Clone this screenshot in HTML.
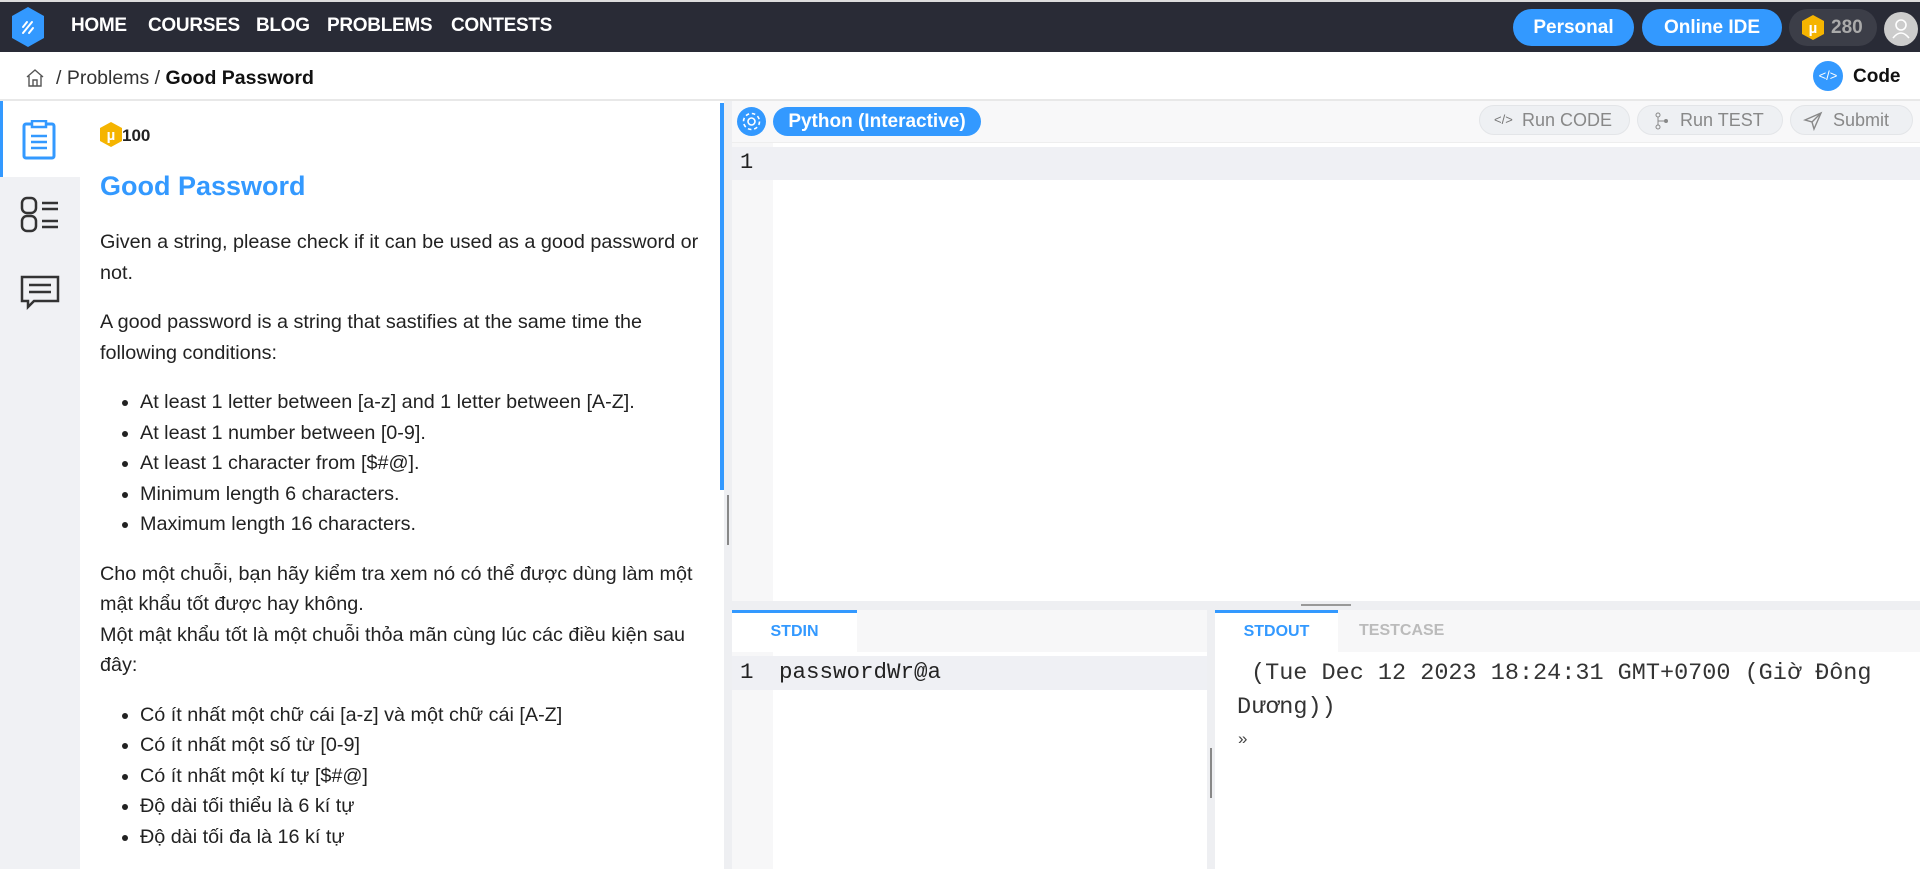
<!DOCTYPE html>
<html><head><meta charset="utf-8">
<style>
*{box-sizing:border-box;margin:0;padding:0}
body{width:1920px;height:869px;overflow:hidden;background:#fff;font-family:"Liberation Sans",Arial,sans-serif;color:#222;position:relative}
.abs{position:absolute}
.nav{left:0;top:0;width:1920px;height:52px;background:#292b36;border-top:2px solid #ddd}
.nav a{position:absolute;top:13px;color:#fff;font-weight:bold;font-size:19px;letter-spacing:-0.3px}
.pill{position:absolute;top:7px;height:37px;border-radius:19px;background:#3399ff;color:#fff;font-weight:bold;font-size:19px;text-align:center;line-height:37px}
.bc{top:52px;left:0;width:1920px;height:49px;border-bottom:2px solid #e8e8e8}
.side{left:0;top:101px;width:80px;height:768px;background:#f0f1f4}
.content{left:100px;top:101px;width:610px;font-size:19.8px;line-height:30.5px;color:#222}
.content p{margin:0}
.content ul{margin:0 0 0 22px;padding-left:18px}
.btn{position:absolute;top:4px;height:30px;border-radius:15px;background:#eef0f3;border:1px solid #e3e5e8;color:#888;font-size:18px;line-height:28px;text-align:left;padding-left:42px}
.mono{font-family:"Liberation Mono","DejaVu Sans Mono",monospace}
</style></head><body>
<div class="abs nav">
  <svg class="abs" style="left:12px;top:5px" width="32" height="40" viewBox="0 0 32 40"><polygon points="16,0 32,9 32,31 16,40 0,31 0,9" fill="#3399ff"/><path d="M11 20 l4-5 M11 26 l9-11 M17 26 l4-5" stroke="#fff" stroke-width="2" stroke-linecap="round"/></svg>
  <a style="left:71px">HOME</a><a style="left:148px">COURSES</a><a style="left:256px">BLOG</a><a style="left:327px">PROBLEMS</a><a style="left:451px">CONTESTS</a>
  <div class="pill" style="left:1513px;width:121px">Personal</div>
  <div class="pill" style="left:1642px;width:140px">Online IDE</div>
  <div class="pill" style="left:1789px;width:88px;background:#3c3e48;color:#aaa;text-align:left;padding-left:42px">280</div>
  <svg class="abs" style="left:1802px;top:13px" width="22" height="25" viewBox="0 0 22 25"><polygon points="11,0 22,6 22,19 11,25 0,19 0,6" fill="#f5b400"/><text x="11" y="18" font-size="15" font-weight="bold" fill="#fff" text-anchor="middle" font-family="Liberation Sans">µ</text></svg>
  <div class="abs" style="left:1884px;top:10px;width:34px;height:34px;border-radius:17px;background:#ccc"><svg width="34" height="34"><circle cx="17" cy="13" r="5" fill="none" stroke="#fff" stroke-width="1.6"/><path d="M9 26 q8-10 16 0" fill="none" stroke="#fff" stroke-width="1.6"/></svg></div>
</div>
<div class="abs bc">
  <svg class="abs" style="left:25px;top:16px" width="20" height="20" viewBox="0 0 20 20"><path d="M2 9 L10 2 L18 9 M4 8 V18 H16 V8 M8 18 V12 H12 V18" fill="none" stroke="#555" stroke-width="1.4"/></svg>
  <div class="abs" style="left:56px;top:15px;font-size:19.5px;color:#333">/ Problems / <b style="color:#111">Good Password</b></div>
  <div class="abs" style="left:1813px;top:9px;width:30px;height:30px;border-radius:15px;background:#3399ff;color:#fff;font-size:13px;text-align:center;line-height:30px">&lt;/&gt;</div>
  <div class="abs" style="left:1853px;top:14px;font-size:19px;font-weight:bold;color:#111">Code</div>
</div>
<div class="abs side">
  <div class="abs" style="left:0;top:0;width:80px;height:76px;background:#fff;border-left:3px solid #3399ff"></div>
  <svg class="abs" style="left:22px;top:19px" width="36" height="40" viewBox="0 0 36 40"><rect x="2" y="4" width="30" height="34" rx="2" fill="none" stroke="#3399ff" stroke-width="3"/><rect x="10" y="1" width="14" height="6" fill="#fff" stroke="#3399ff" stroke-width="2.5"/><path d="M9 16H25M9 22H25M9 28H25" stroke="#3399ff" stroke-width="2.5"/></svg>
  <svg class="abs" style="left:20px;top:94px" width="40" height="40" viewBox="0 0 40 40"><rect x="2" y="3" width="14" height="15" rx="5" fill="none" stroke="#333" stroke-width="2.5"/><rect x="2" y="21" width="14" height="15" rx="5" fill="none" stroke="#333" stroke-width="2.5"/><path d="M22 8H38M22 14H38M22 26H38M22 32H38" stroke="#333" stroke-width="2.5"/></svg>
  <svg class="abs" style="left:20px;top:174px" width="40" height="36" viewBox="0 0 40 36"><path d="M2 2H38V26H14L8 32V26H2Z" fill="none" stroke="#333" stroke-width="2.5"/><path d="M9 10H31M9 17H31" stroke="#333" stroke-width="2.5"/></svg>
</div>
<div class="abs content">
  <div style="position:absolute;top:21px;left:0;font-weight:bold;font-size:17px;line-height:22px"><svg width="22" height="25" viewBox="0 0 22 25" style="vertical-align:-6px"><polygon points="11,0 22,6 22,19 11,25 0,19 0,6" fill="#f5b400"/><text x="11" y="18" font-size="15" font-weight="bold" fill="#fff" text-anchor="middle" font-family="Liberation Sans">µ</text></svg>100</div>
  <div style="position:absolute;top:70px;left:0;font-size:27px;font-weight:bold;color:#3399ff">Good Password</div>
  <div style="position:absolute;top:126px;left:0;width:610px">
    <p>Given a string, please check if it can be used as a good password or not.</p>
    <p style="margin-top:19px">A good password is a string that sastifies at the same time the following conditions:</p>
    <ul style="margin-top:19px"><li>At least 1 letter between [a-z] and 1 letter between [A-Z].</li><li>At least 1 number between [0-9].</li><li>At least 1 character from [$#@].</li><li>Minimum length 6 characters.</li><li>Maximum length 16 characters.</li></ul>
    <p style="margin-top:19px">Cho một chuỗi, bạn hãy kiểm tra xem nó có thể được dùng làm một mật khẩu tốt được hay không.<br>Một mật khẩu tốt là một chuỗi thỏa mãn cùng lúc các điều kiện sau đây:</p>
    <ul style="margin-top:19px"><li>Có ít nhất một chữ cái [a-z] và một chữ cái [A-Z]</li><li>Có ít nhất một số từ [0-9]</li><li>Có ít nhất một kí tự [$#@]</li><li>Độ dài tối thiểu là 6 kí tự</li><li>Độ dài tối đa là 16 kí tự</li></ul>
  </div>
</div>
<div class="abs" style="left:720px;top:103px;width:4px;height:387px;background:#3399ff"></div>
<div class="abs" style="left:724px;top:101px;width:8px;height:768px;background:#eeeff2"></div>
<div class="abs" style="left:727px;top:495px;width:2px;height:50px;background:#888"></div>
<!-- right -->
<div class="abs" style="left:732px;top:101px;width:1188px;height:42px;background:#f8f8f9;border-bottom:1px solid #eee">
  <div class="abs" style="left:5px;top:6px;width:29px;height:29px;border-radius:15px;background:#3399ff"><svg width="29" height="29" viewBox="0 0 29 29"><circle cx="14.5" cy="14.5" r="3.5" fill="none" stroke="#fff" stroke-width="1.6"/><circle cx="14.5" cy="14.5" r="8" fill="none" stroke="#fff" stroke-width="1.6" stroke-dasharray="3.5 2.8"/></svg></div>
  <div class="abs" style="left:41px;top:6px;width:208px;height:29px;border-radius:15px;background:#3399ff;color:#fff;font-weight:bold;font-size:19px;text-align:center;line-height:29px">Python (Interactive)</div>
  <div class="btn" style="left:747px;width:151px"><span style="position:absolute;left:14px;font-size:13px;color:#777">&lt;/&gt;</span>Run CODE</div>
  <div class="btn" style="left:905px;width:146px"><svg style="position:absolute;left:16px;top:6px" width="16" height="18"><circle cx="4" cy="3" r="2" fill="none" stroke="#888"/><circle cx="4" cy="15" r="2" fill="none" stroke="#888"/><circle cx="12" cy="9" r="2" fill="#888"/><path d="M4 5V13M4 9H10" stroke="#888"/></svg>Run TEST</div>
  <div class="btn" style="left:1058px;width:123px"><svg style="position:absolute;left:12px;top:5px" width="20" height="20"><path d="M2 9L18 2L11 18L9 11Z M9 11L18 2" fill="none" stroke="#888" stroke-width="1.4"/></svg>Submit</div>
</div>
<div class="abs" style="left:732px;top:143px;width:1188px;height:458px;background:#fff"></div>
<div class="abs" style="left:732px;top:143px;width:41px;height:458px;background:#f7f7f8"></div>
<div class="abs" style="left:773px;top:147px;width:1147px;height:33px;background:#eff0f4"></div>
<div class="abs" style="left:732px;top:147px;width:41px;height:33px;background:#eff0f4"></div>
<div class="abs mono" style="left:740px;top:150px;font-size:22px;color:#222">1</div>
<div class="abs" style="left:732px;top:601px;width:1188px;height:9px;background:#eeeff2"></div>
<div class="abs" style="left:1301px;top:604px;width:50px;height:2px;background:#999"></div>
<!-- stdin -->
<div class="abs" style="left:732px;top:610px;width:475px;height:259px;background:#fff"></div>
<div class="abs" style="left:732px;top:610px;width:475px;height:42px;background:#f7f7f8"></div>
<div class="abs" style="left:732px;top:610px;width:125px;height:42px;background:#fff;border-top:3px solid #3399ff;color:#3399ff;font-weight:bold;font-size:16px;text-align:center;line-height:38px">STDIN</div>
<div class="abs" style="left:732px;top:652px;width:41px;height:217px;background:#f7f7f8"></div>
<div class="abs" style="left:732px;top:656px;width:475px;height:34px;background:#eff0f4"></div>
<div class="abs mono" style="left:740px;top:659px;font-size:22.5px;color:#222">1</div>
<div class="abs mono" style="left:779px;top:659px;font-size:22.5px;color:#222">passwordWr@a</div>
<div class="abs" style="left:1207px;top:610px;width:8px;height:259px;background:#eeeff2"></div>
<div class="abs" style="left:1210px;top:748px;width:2px;height:50px;background:#888"></div>
<!-- stdout -->
<div class="abs" style="left:1215px;top:610px;width:705px;height:42px;background:#f7f7f8"></div>
<div class="abs" style="left:1215px;top:610px;width:123px;height:42px;background:#fff;border-top:3px solid #3399ff;color:#3399ff;font-weight:bold;font-size:16px;text-align:center;line-height:38px">STDOUT</div>
<div class="abs" style="left:1359px;top:622px;color:#bbb;font-weight:bold;font-size:16px">TESTCASE</div>
<div class="abs mono" style="left:1251px;top:657px;font-size:23.5px;color:#333;line-height:34px;white-space:nowrap">(Tue Dec 12 2023 18:24:31 GMT+0700 (Giờ Đông</div>
<div class="abs mono" style="left:1237px;top:691px;font-size:23.5px;color:#333;line-height:34px">Dương))</div>
<div class="abs" style="left:1238px;top:729px;font-size:17px;color:#444">»</div>
</body></html>
